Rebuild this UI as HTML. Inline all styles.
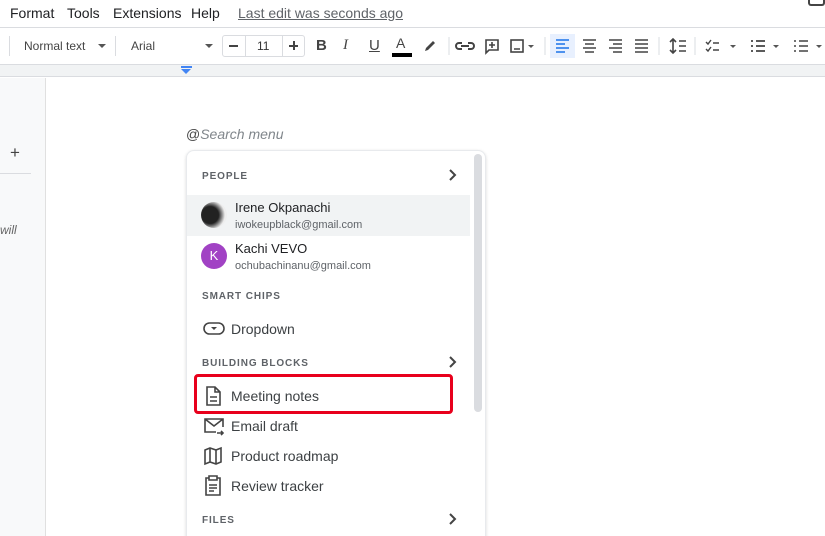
<!DOCTYPE html>
<html><head><style>
*{margin:0;padding:0;box-sizing:border-box}
html,body{width:825px;height:536px;overflow:hidden}
body{background:#fff;font-family:"Liberation Sans",Arial,sans-serif;color:#202124;position:relative}
.abs{position:absolute}
.menu span{position:absolute;top:5px;font-size:14px;color:#202124}
.tb{font-size:12px;color:#444}
.hdr{position:absolute;left:202px;font-size:10px;letter-spacing:0.9px;color:#5f6368;font-weight:bold}
.chev{position:absolute;left:447px}
.item{position:absolute;left:231px;font-size:14px;color:#3c4043}
.ic{position:absolute;left:203px}
</style></head><body>
<div class="menu">
<span style="left:10px">Format</span><span style="left:67px">Tools</span><span style="left:113px">Extensions</span><span style="left:191px">Help</span>
<span style="left:238px;color:#5f6368;text-decoration:underline">Last edit was seconds ago</span>
</div>
<div class="abs" style="left:808px;top:0;width:17px;height:6px;border:2px solid #444;border-top:none;border-radius:0 0 3px 3px"></div>
<div class="abs" style="left:0;top:27px;width:825px;height:1px;background:#dadce0"></div>
<!-- toolbar -->
<div class="abs" style="left:9px;top:36px;width:1px;height:20px;background:#dadce0"></div>
<div class="abs tb" style="left:24px;top:39px">Normal text</div>
<div class="abs" style="left:98px;top:44px;border:4px solid transparent;border-top:4px solid #555"></div>
<div class="abs" style="left:115px;top:36px;width:1px;height:20px;background:#dadce0"></div>
<div class="abs tb" style="left:131px;top:39px">Arial</div>
<div class="abs" style="left:205px;top:44px;border:4px solid transparent;border-top:4px solid #555"></div>
<div class="abs" style="left:222px;top:35px;width:83px;height:22px;border:1px solid #dadce0;border-radius:3px"></div>
<div class="abs" style="left:245px;top:35px;width:1px;height:22px;background:#dadce0"></div>
<div class="abs" style="left:282px;top:35px;width:1px;height:22px;background:#dadce0"></div>
<div class="abs" style="left:229px;top:45px;width:9px;height:2px;background:#444"></div>
<div class="abs tb" style="left:257px;top:39px;color:#333">11</div>
<div class="abs" style="left:289px;top:45px;width:9px;height:2px;background:#444"></div>
<div class="abs" style="left:293px;top:41px;width:2px;height:9px;background:#444"></div>
<div class="abs" style="left:316px;top:37px;font-weight:bold;font-size:15px;color:#444">B</div>
<div class="abs" style="left:343px;top:37px;font-style:italic;font-size:15px;color:#444;font-family:'Liberation Serif',serif">I</div>
<div class="abs" style="left:369px;top:37px;text-decoration:underline;font-size:15px;color:#444">U</div>
<div class="abs" style="left:396px;top:35px;font-size:14px;color:#444">A</div>
<div class="abs" style="left:392px;top:53px;width:20px;height:4px;background:#000"></div>
<svg class="abs" style="left:420px;top:34px" width="405" height="24" viewBox="0 0 405 24" fill="none" stroke="#444" stroke-width="2">
<path d="M5 17l3-1 7-7-2-2-7 7z" fill="#444" stroke="none"/>
<line x1="29" y1="3" x2="29" y2="21" stroke="#dadce0" stroke-width="1"/>
<path d="M42 9h-3a3 3 0 000 6h3M48 9h3a3 3 0 010 6h-3M41 12h8"/>
<path d="M66 6h12v10h-9l-3 3z" stroke-width="1.6"/><path d="M72 8v6M69 11h6" stroke-width="1.6"/>
<rect x="91" y="6" width="12" height="12" stroke-width="1.6"/><path d="M94 15h6" stroke-width="1.5"/>
<path d="M108 11l3 3 3-3z" fill="#555" stroke="none"/>
<line x1="125" y1="3" x2="125" y2="21" stroke="#dadce0" stroke-width="1"/>
<rect x="130" y="0" width="25" height="24" fill="#e8f0fe" stroke="none"/>
<path d="M136 6h13M136 10h9M136 14h13M136 18h9" stroke="#1a73e8" stroke-width="1.6"/>
<path d="M163 6h13M165 10h9M163 14h13M165 18h9" stroke-width="1.6"/>
<path d="M189 6h13M193 10h9M189 14h13M193 18h9" stroke-width="1.6"/>
<path d="M215 6h13M215 10h13M215 14h13M215 18h13" stroke-width="1.6"/>
<line x1="239" y1="3" x2="239" y2="21" stroke="#dadce0" stroke-width="1"/>
<path d="M253 5v14M250 8l3-3 3 3M250 16l3 3 3-3M259 7h7M259 12h7M259 17h7" stroke-width="1.6"/>
<line x1="275" y1="3" x2="275" y2="21" stroke="#dadce0" stroke-width="1"/>
<path d="M286 8l2 2 3-4M286 15l2 2 3-4M293 9h6M293 16h6" stroke-width="1.4"/>
<path d="M310 11l3 3 3-3z" fill="#555" stroke="none"/>
<path d="M331 7h2M331 12h2M331 17h2M336 7h9M336 12h9M336 17h9" stroke-width="1.8"/>
<path d="M353 11l3 3 3-3z" fill="#555" stroke="none"/>
<path d="M374 7h2M374 12h2M374 17h2M379 7h9M379 12h9M379 17h9" stroke-width="1.6"/>
<path d="M396 11l3 3 3-3z" fill="#555" stroke="none"/>
</svg>
<!-- ruler -->
<div class="abs" style="left:0;top:64px;width:825px;height:13px;background:#f1f3f4;border-top:1px solid #dadce0;border-bottom:1px solid #dadce0"></div>
<div class="abs" style="left:181px;top:66px;width:11px;height:2px;background:#4285f4"></div>
<div class="abs" style="left:181px;top:69px;border-left:5.5px solid transparent;border-right:5.5px solid transparent;border-top:5px solid #4285f4"></div>
<!-- left panel -->
<div class="abs" style="left:0;top:78px;width:46px;height:458px;background:#f8f9fa;border-right:1px solid #e0e0e0"></div>
<div class="abs" style="left:10px;top:143px;font-size:17px;color:#444">+</div>
<div class="abs" style="left:0;top:173px;width:31px;height:1px;background:#dadce0"></div>
<div class="abs" style="left:0;top:223px;font-size:12px;font-style:italic;color:#666">will</div>
<!-- search -->
<div class="abs" style="left:186px;top:126px;font-size:14px;color:#444">@<i style="color:#80868b">Search menu</i></div>
<!-- popup -->
<div class="abs" style="left:186px;top:150px;width:300px;height:400px;border:1px solid #e8eaed;border-radius:8px;box-shadow:0 1px 3px rgba(0,0,0,.15);background:#fff"></div>
<div class="abs" style="left:474px;top:154px;width:8px;height:258px;border-radius:4px;background:#dadce0"></div>
<div class="hdr" style="top:171px">PEOPLE</div>
<svg class="chev" style="top:168px" width="12" height="14"><path d="M3 2l5 5-5 5" stroke="#444" stroke-width="2" fill="none"/></svg>
<div class="abs" style="left:187px;top:195px;width:283px;height:41px;background:#f1f3f4"></div>
<div class="abs" style="left:201px;top:202px;width:26px;height:26px;border-radius:50%;background:radial-gradient(circle at 35% 50%,#222 0 40%,#888 55%,#eee 70%)"></div>
<div class="item" style="left:235px;top:200px;color:#202124;font-size:13px">Irene Okpanachi</div>
<div class="item" style="left:235px;top:219px;font-size:11px;color:#5f6368">iwokeupblack@gmail.com</div>
<div class="abs" style="left:201px;top:243px;width:26px;height:26px;border-radius:50%;background:#a142c4;color:#fff;font-size:13px;text-align:center;line-height:26px">K</div>
<div class="item" style="left:235px;top:241px;color:#202124;font-size:13px">Kachi VEVO</div>
<div class="item" style="left:235px;top:260px;font-size:11px;color:#5f6368">ochubachinanu@gmail.com</div>
<div class="hdr" style="top:291px">SMART CHIPS</div>
<svg class="ic" style="top:320px" width="22" height="16"><rect x="1" y="3" width="20" height="11" rx="5.5" stroke="#444" stroke-width="1.6" fill="none"/><path d="M8 7h6l-3 3z" fill="#444"/></svg>
<div class="item" style="top:321px">Dropdown</div>
<div class="hdr" style="top:358px">BUILDING BLOCKS</div>
<svg class="chev" style="top:355px" width="12" height="14"><path d="M3 2l5 5-5 5" stroke="#444" stroke-width="2" fill="none"/></svg>
<div class="abs" style="left:194px;top:374px;width:259px;height:40px;border:3px solid #e8001c;border-radius:4px"></div>
<svg class="ic" style="top:385px" width="20" height="22" fill="none" stroke="#444" stroke-width="1.6"><path d="M4 2h8l5 5v13H4z M12 2v5h5 M7 12h7 M7 16h7"/></svg>
<div class="item" style="top:388px">Meeting notes</div>
<svg class="ic" style="top:417px" width="22" height="20" fill="none" stroke="#444" stroke-width="1.6"><path d="M13 15H2V2h18v8 M2 2l9 7 9-7 M14 16h6 M18 14l2 2-2 2"/></svg>
<div class="item" style="top:418px">Email draft</div>
<svg class="ic" style="top:446px" width="20" height="20" fill="none" stroke="#444" stroke-width="1.6"><path d="M2 4l5-2 6 2 5-2v14l-5 2-6-2-5 2z M7 2v14 M13 4v14"/></svg>
<div class="item" style="top:448px">Product roadmap</div>
<svg class="ic" style="top:475px" width="20" height="22" fill="none" stroke="#444" stroke-width="1.6"><path d="M6 3H3v17h14V3h-3 M6 1h8v4H6z M6 10h8 M6 13h8 M6 16h5"/></svg>
<div class="item" style="top:478px">Review tracker</div>
<div class="hdr" style="top:515px">FILES</div>
<svg class="chev" style="top:512px" width="12" height="14"><path d="M3 2l5 5-5 5" stroke="#444" stroke-width="2" fill="none"/></svg>
</body></html>
